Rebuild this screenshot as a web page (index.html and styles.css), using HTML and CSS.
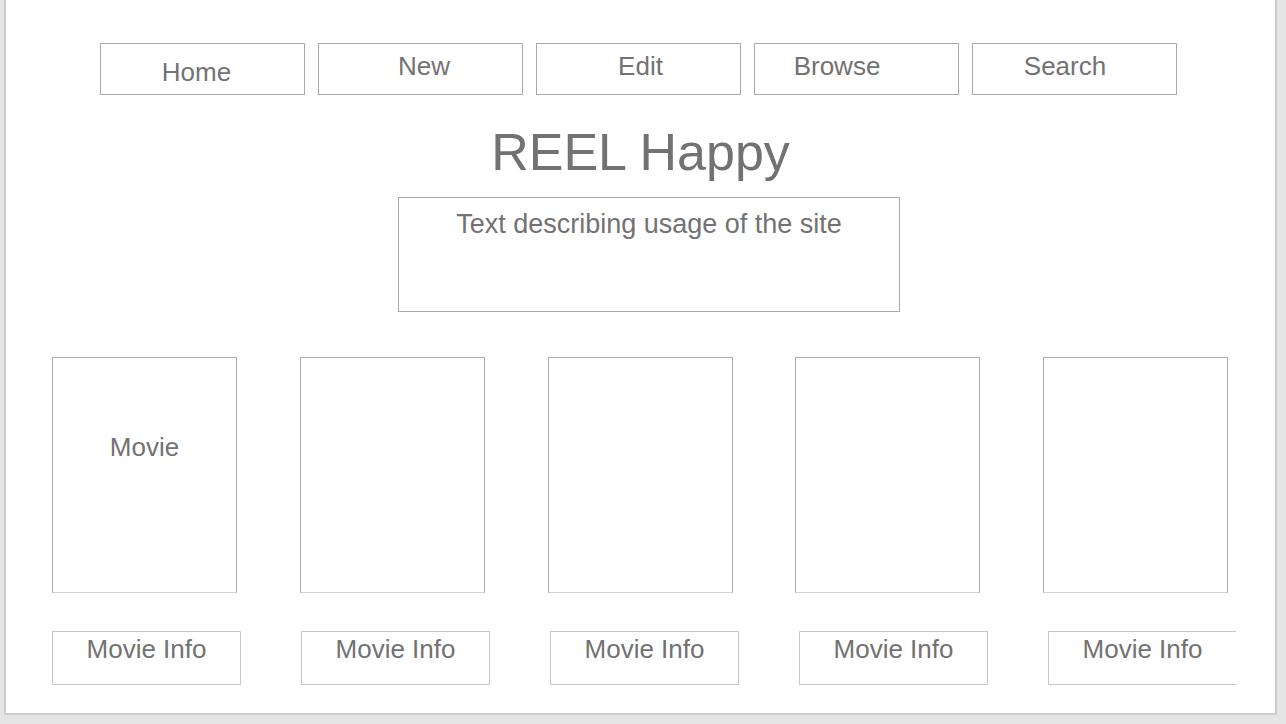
FILE: index.html
```html
<!DOCTYPE html>
<html>

<head>
  <title>REEL Happy</title>
  <link rel="stylesheet" href="styles.css">
</head>

<body>
  <div class="page">
    <div class="nav">
      <div class="nav-item nav-home">Home</div>
      <div class="nav-item nav-new">New</div>
      <div class="nav-item nav-edit">Edit</div>
      <div class="nav-item nav-browse">Browse</div>
      <div class="nav-item nav-search">Search</div>
    </div>

    <h1 class="title">REEL Happy</h1>

    <div class="about">Text describing usage of the site</div>

    <div class="movie-row">
      <div class="movie">Movie</div>
      <div class="movie"></div>
      <div class="movie"></div>
      <div class="movie"></div>
      <div class="movie"></div>
    </div>

    <div class="info-row">
      <div class="movie-info">Movie Info</div>
      <div class="movie-info">Movie Info</div>
      <div class="movie-info">Movie Info</div>
      <div class="movie-info">Movie Info</div>
      <div class="movie-info">Movie Info</div>
    </div>
  </div>
</body>

</html>
```

FILE: styles.css
```css
body {
  margin: 0;
  background-color: #e4e4e4;
  font-family: "Liberation Sans", Arial, sans-serif;
  color: #727272;
  overflow: hidden;
}

.page {
  display: flow-root;
  box-sizing: border-box;
  width: 1273px;
  height: 715px;
  margin-left: 4px;
  padding-top: 43px;
  background-color: #fff;
  border: 2px solid #cbcbcb;
  border-top: none;
}

/* top navigation */
.nav {
  display: flex;
  gap: 13px;
  margin-left: 94px;
}

.nav-item {
  box-sizing: border-box;
  width: 205px;
  height: 52px;
  padding-top: 7px;
  border: 1px solid #a9a9a9;
  font-size: 26px;
  line-height: 30px;
  text-align: center;
}

.nav-home {
  padding-top: 13px;
  padding-right: 12px;
}

.nav-new {
  padding-left: 7px;
}

.nav-edit {
  padding-left: 4px;
}

.nav-browse {
  padding-right: 39px;
}

.nav-search {
  padding-right: 19px;
}

.title {
  margin: 27px 0 0;
  font-size: 52px;
  font-weight: normal;
  line-height: 60px;
  text-align: center;
}

.about {
  box-sizing: border-box;
  width: 502px;
  height: 115px;
  margin: 15px 0 0 392px;
  padding-top: 11px;
  border: 1px solid #a9a9a9;
  font-size: 27px;
  line-height: 30px;
  text-align: center;
}

/* movie posters */
.movie-row {
  display: grid;
  grid-template-columns: repeat(5, 185px);
  column-gap: 62.75px;
  margin: 45px 0 0 46px;
}

.movie {
  box-sizing: border-box;
  height: 236px;
  padding-top: 74px;
  border: 1px solid #acacac;
  border-bottom-color: #d2d2d2;
  font-size: 26px;
  line-height: 30px;
  text-align: center;
}

.info-row {
  display: flex;
  gap: 60px;
  width: 1184px;
  margin: 38px 0 0 46px;
  overflow: hidden;
}

.movie-info {
  box-sizing: border-box;
  flex: 0 0 189px;
  height: 54px;
  padding-top: 2px;
  border: 1px solid #c6c6c6;
  font-size: 26px;
  line-height: 30px;
  text-align: center;
}
```
